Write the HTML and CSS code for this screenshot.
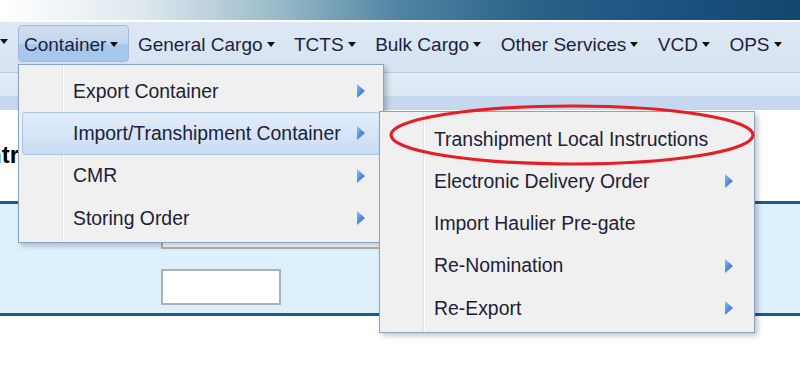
FILE: index.html
```html
<!DOCTYPE html>
<html>
<head>
<meta charset="utf-8">
<link rel="stylesheet" href="styles.css">
</head>
<body>
<div class="page">
  <div class="topbar"></div>
  <nav class="menubar">
    <span class="lead"><svg class="caret" viewBox="0 0 8 5"><polygon points="0,0 8,0 4,5"/></svg></span>
    <span class="item active">Container<svg class="caret" viewBox="0 0 8 5"><polygon points="0,0 8,0 4,5"/></svg></span>
    <span class="item">General Cargo<svg class="caret" viewBox="0 0 8 5"><polygon points="0,0 8,0 4,5"/></svg></span>
    <span class="item">TCTS<svg class="caret" viewBox="0 0 8 5"><polygon points="0,0 8,0 4,5"/></svg></span>
    <span class="item">Bulk Cargo<svg class="caret" viewBox="0 0 8 5"><polygon points="0,0 8,0 4,5"/></svg></span>
    <span class="item">Other Services<svg class="caret" viewBox="0 0 8 5"><polygon points="0,0 8,0 4,5"/></svg></span>
    <span class="item">VCD<svg class="caret" viewBox="0 0 8 5"><polygon points="0,0 8,0 4,5"/></svg></span>
    <span class="item">OPS<svg class="caret" viewBox="0 0 8 5"><polygon points="0,0 8,0 4,5"/></svg></span>
  </nav>
  <div class="band1"></div>
  <div class="band2"></div>
  <main class="content">
    <h1 class="title">Control</h1>
  </main>
  <section class="panel">
    <div class="field wide"></div>
    <div class="field short"></div>
  </section>

  <div class="menu dropdown">
    <div class="row"><span>Export Container</span><svg class="arrow" viewBox="0 0 8 14"><polygon points="0,0 8,7 0,14" fill="url(#g1)"/></svg></div>
    <div class="row hover"><span>Import/Transhipment Container</span><svg class="arrow" viewBox="0 0 8 14"><polygon points="0,0 8,7 0,14" fill="url(#g1)"/></svg></div>
    <div class="row"><span>CMR</span><svg class="arrow" viewBox="0 0 8 14"><polygon points="0,0 8,7 0,14" fill="url(#g1)"/></svg></div>
    <div class="row"><span>Storing Order</span><svg class="arrow" viewBox="0 0 8 14"><polygon points="0,0 8,7 0,14" fill="url(#g1)"/></svg></div>
  </div>

  <div class="menu submenu">
    <div class="row"><span>Transhipment Local Instructions</span></div>
    <div class="row"><span>Electronic Delivery Order</span><svg class="arrow" viewBox="0 0 8 14"><polygon points="0,0 8,7 0,14" fill="url(#g1)"/></svg></div>
    <div class="row"><span>Import Haulier Pre-gate</span></div>
    <div class="row"><span>Re-Nomination</span><svg class="arrow" viewBox="0 0 8 14"><polygon points="0,0 8,7 0,14" fill="url(#g1)"/></svg></div>
    <div class="row"><span>Re-Export</span><svg class="arrow" viewBox="0 0 8 14"><polygon points="0,0 8,7 0,14" fill="url(#g1)"/></svg></div>
  </div>

  <svg class="ellipse" viewBox="0 0 370 64">
    <ellipse cx="184" cy="32" rx="181" ry="29" fill="none" stroke="#e41f26" stroke-width="3.2"/>
  </svg>

  <svg class="defs" width="0" height="0">
    <defs>
      <linearGradient id="g1" x1="0" y1="0" x2="1" y2="1">
        <stop offset="0" stop-color="#8fc0f4"/>
        <stop offset="0.5" stop-color="#4a8fe2"/>
        <stop offset="1" stop-color="#2d6fc8"/>
      </linearGradient>
    </defs>
  </svg>
</div>
</body>
</html>
```
FILE: styles.css
```css
html, body {
  margin: 0;
  padding: 0;
  background: #ffffff;
}
.page {
  position: relative;
  width: 800px;
  height: 380px;
  overflow: hidden;
  font-family: "Liberation Sans", Arial, sans-serif;
}
.topbar {
  height: 20px;
  border-bottom: 2px solid #ffffff;
  background: linear-gradient(to right, #ffffff 0%, #dde8ee 18%, #9dbccb 34%, #4f84a2 50%, #2a6389 66%, #1b5480 82%, #144670 100%);
}
.menubar {
  height: 47px;
  padding-top: 3px;
  display: flex;
  align-items: flex-start;
  gap: 2.5px;
  background: linear-gradient(to bottom, #dde8f4 0%, #d7e3f1 100%);
  border-bottom: 1px solid #b8cbe3;
}
.lead {
  width: 18px;
  padding-top: 14px;
  margin-right: -2.5px;
}
.lead .caret {
  display: block;
  margin: 0;
}
.item {
  box-sizing: border-box;
  height: 37px;
  padding: 8px 10px 0 5px;
  line-height: 22px;
  font-size: 19px;
  color: #1e1e40;
  border: 1px solid transparent;
  border-radius: 4px;
  white-space: nowrap;
}
.item.active {
  border-color: #a2b9d9;
  background: linear-gradient(to bottom, #cfdeee 0%, #c3d6ed 50%, #a9c8ee 52%, #a6c6ee 100%);
}
.caret {
  width: 8px;
  height: 5px;
  margin-left: 4px;
  vertical-align: 4px;
  fill: #111111;
}
.band1 {
  height: 23px;
  background: linear-gradient(to bottom, #e4ecf6 0%, #dae6f3 100%);
}
.band2 {
  height: 14px;
  background: #c6d8ef;
}
.content {
  height: 91px;
  box-sizing: border-box;
  padding-top: 31px;
}
.title {
  margin: 0 0 0 -45px;
  font-size: 24px;
  line-height: 28px;
  font-weight: bold;
  color: #000000;
}
.panel {
  border-top: 3px solid #1b5a8b;
  border-bottom: 3px solid #1b5a8b;
  background: #ddf0fe;
  padding: 9px 0 0 161px;
  box-sizing: border-box;
  height: 115px;
  display: flex;
  flex-direction: column;
  gap: 20px;
}
.field {
  height: 36px;
  box-sizing: border-box;
  border: 2px solid #b0b0b0;
  background: #ffffff;
}
.field.wide { width: 260px; }
.field.short { width: 120px; }

.menu {
  position: absolute;
  box-sizing: border-box;
  border: 1px solid #8aa1c7;
  background-color: #f0f0f0;
  box-shadow: 3px 3px 5px rgba(0, 0, 0, 0.22);
  padding: 4px 3px 5px;
  background-image: linear-gradient(to right, transparent 43px, #e2e2e2 43px, #e2e2e2 44px, #ffffff 44px, #ffffff 45px, transparent 45px);
}
.dropdown {
  left: 18px;
  top: 64px;
  width: 366px;
  height: 179px;
  padding-top: 5px;
}
.submenu {
  left: 379px;
  top: 111px;
  width: 376px;
  height: 222px;
  padding-top: 6px;
}
.row {
  height: 42.3px;
  box-sizing: border-box;
  display: flex;
  align-items: center;
  padding: 0 14px 0 50px;
  border: 1px solid transparent;
  border-radius: 3px;
  font-size: 19.4px;
  color: #202038;
  white-space: nowrap;
}
.submenu .row {
  height: 42.25px;
  padding-right: 17px;
}
.row.hover {
  border-color: #aac6ec;
  background: linear-gradient(to bottom, #e3edf9 0%, #d6e5f7 50%, #cadcf4 100%);
}
.arrow {
  margin-left: auto;
  width: 8px;
  height: 14px;
}
.ellipse {
  position: absolute;
  left: 388px;
  top: 103px;
  width: 370px;
  height: 64px;
}
.defs {
  position: absolute;
  left: 0;
  top: 0;
}
```
